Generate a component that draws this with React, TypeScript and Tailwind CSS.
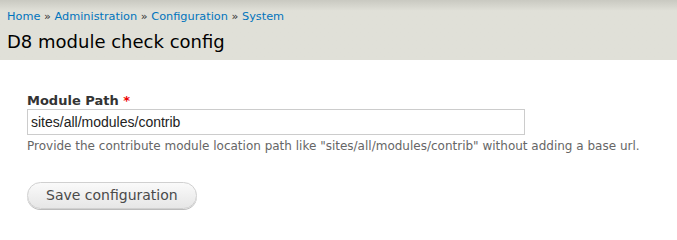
export default function App() {
  return (
    <div className="min-h-[226px] bg-white" style={{ fontFamily: '"DejaVu Sans", sans-serif' }}>
      <div className="h-[60px] bg-[#e0e0d8] bg-gradient-to-b from-[#c9c9c1] via-[#e0e0d8] via-[18%] to-[#e0e0d8] px-[7px] pt-[9px]">
        <div className="text-[11.3px] leading-[15px] text-[#0074bd]">
          <a>Home</a> <span className="text-[#333]">»</span> <a>Administration</a>{' '}
          <span className="text-[#333]">»</span> <a>Configuration</a> <span className="text-[#333]">»</span>{' '}
          <a>System</a>
        </div>
        <h1 className="mt-[6px] text-[18px] leading-[24px] font-normal text-black">D8 module check config</h1>
      </div>

      <div className="px-[27px] pt-[32px]">
        <label className="block text-[13px] leading-[17px] font-bold text-[#333]">
          Module Path <span className="text-[#e00]">*</span>
        </label>
        <input
          defaultValue="sites/all/modules/contrib"
          className="block h-[26px] w-[498px] border border-[#ccc] px-[3px] text-[14px] text-[#222] outline-none"
          style={{ fontFamily: '"Liberation Sans", Arial, sans-serif' }}
        />
        <div className="mt-[4px] text-[12px] leading-[15px] text-[#666]">
          Provide the contribute module location path like "sites/all/modules/contrib" without adding a base url.
        </div>
        <button className="mt-[28px] h-[27px] rounded-[14px] border border-[#d0d0d0] bg-gradient-to-b from-[#fafafa] to-[#e6e6e6] px-[18px] text-[14px] text-[#4a4a4a] shadow-[0_1px_0_#bbb]">
          Save configuration
        </button>
      </div>
    </div>
  );
}
